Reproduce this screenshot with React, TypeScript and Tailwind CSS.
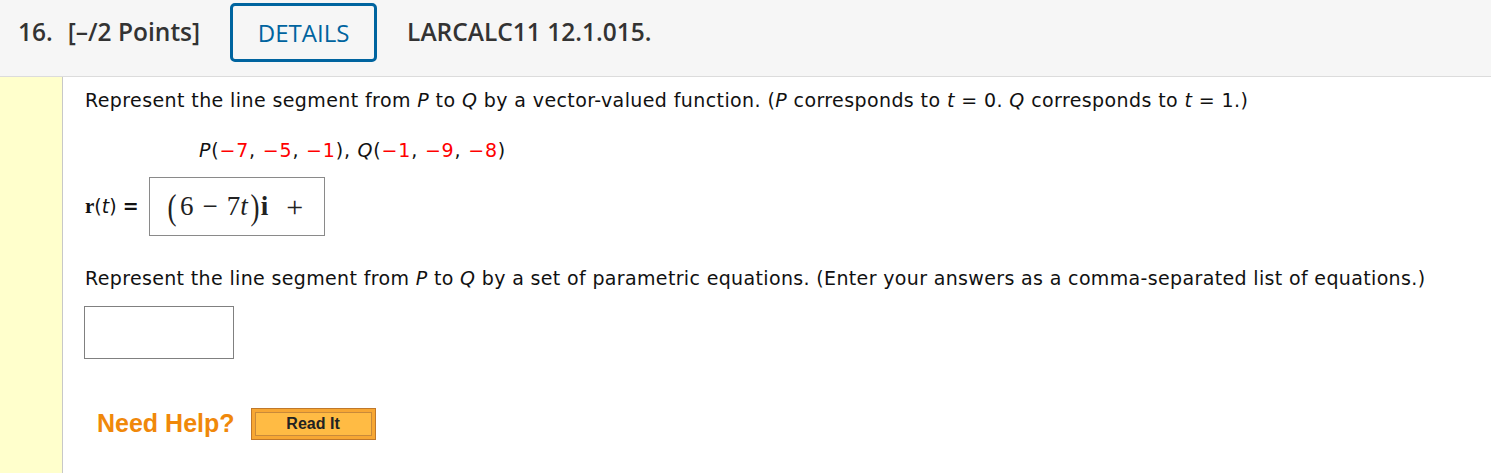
export default function App() {
  return (
    <div className="w-[1491px] h-[473px] bg-white overflow-hidden">
      {/* header */}
      <div className="h-[77px] bg-[#f6f6f6] border-b border-[#dcdcdc] flex items-start pl-[18px] font-['Open_Sans',sans-serif] font-semibold text-[24.5px] text-[#333]">
        <div className="flex items-center h-[64px]">
          <span>16.</span>
          <span className="ml-[15px]">[–/2 Points]</span>
        </div>
        <div className="mt-[3px] ml-[30px] w-[147px] h-[59px] border-[3px] border-[#00649f] rounded-[5px] flex items-center justify-center text-[#00649f] font-normal text-[24px]">
          DETAILS
        </div>
        <div className="flex items-center h-[64px] ml-[30px]">LARCALC11 12.1.015.</div>
      </div>

      <div className="flex h-[396px]">
        {/* left stripe */}
        <div className="w-[63px] shrink-0 bg-[#ffffcc] border-r border-[#c8c8c8]" />

        {/* question body */}
        <div className="flex-1 pl-[22px] pt-[11px] font-['DejaVu_Sans',Verdana,sans-serif] text-[19px] tracking-[0.4px] text-[#111]">
          <p className="leading-[24px] whitespace-nowrap">
            Represent the line segment from <i>P</i> to <i>Q</i> by a vector-valued function. (<i>P</i> corresponds to <i>t</i> = 0. <i>Q</i> corresponds to <i>t</i> = 1.)
          </p>

          <p className="leading-[24px] mt-[26px] ml-[114px] tracking-[0.8px]">
            <i>P</i>(<span className="text-[#ff0000]">−7</span>, <span className="text-[#ff0000]">−5</span>, <span className="text-[#ff0000]">−1</span>), <i>Q</i>(<span className="text-[#ff0000]">−1</span>, <span className="text-[#ff0000]">−9</span>, <span className="text-[#ff0000]">−8</span>)
          </p>

          <div className="flex items-center mt-[15px]">
            <span className="w-[64px] tracking-normal">
              <b className="font-['Liberation_Serif',serif] text-[21px]">r</b>(<i>t</i>) <b>=</b>
            </span>
            <div className="w-[176px] h-[59px] border border-[#8a8a8a] flex items-center pl-[16px] font-['Liberation_Serif',serif] text-[27px] tracking-normal text-[#222]">
              <span className="text-[36px] leading-none font-light scale-x-75">(</span>
              <span className="ml-[2px]">6</span>
              <span className="mx-[9px]">−</span>
              <span>7<i>t</i></span>
              <span className="text-[36px] leading-none font-light scale-x-75 ml-[1px]">)</span>
              <b>i</b>
              <span className="ml-[18px] text-[30px] leading-none">+</span>
            </div>
          </div>

          <p className="leading-[24px] mt-[30px] whitespace-nowrap tracking-[0.35px]">
            Represent the line segment from <i>P</i> to <i>Q</i> by a set of parametric equations. (Enter your answers as a comma-separated list of equations.)
          </p>

          <div className="w-[150px] h-[53px] border border-[#808080] mt-[16px] ml-[-1px]" />

          <div className="flex items-center mt-[46px] ml-[12px]">
            <span className="font-['Liberation_Sans',Arial,sans-serif] font-bold text-[25px] tracking-normal text-[#f0880a]">Need Help?</span>
            <div className="ml-[16px] w-[125px] h-[32px] bg-[#f7a733] border border-[#c0782a] p-[3px]">
              <div className="h-full bg-[#ffbb44] border border-[#c98a3a] flex items-center justify-center font-['Liberation_Sans',Arial,sans-serif] font-bold text-[16px] tracking-normal text-[#222]">
                Read It
              </div>
            </div>
          </div>
        </div>
      </div>
    </div>
  );
}
